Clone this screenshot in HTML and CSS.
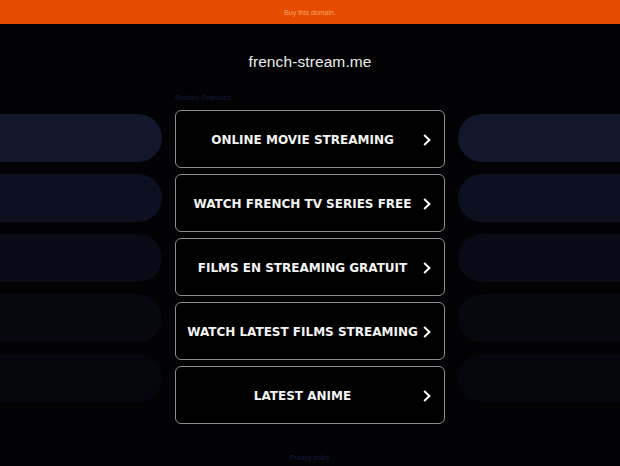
FILE: index.html
```html
<!DOCTYPE html>
<html lang="en">
<head>
<meta charset="utf-8">
<title>french-stream.me</title>
<link rel="stylesheet" href="styles.css">
</head>
<body>
<div class="topbar"><a class="buy" href="#">Buy this domain.</a></div>
<h1 class="title">french-stream.me</h1>
<div class="content">
  <div class="side side-left">
    <div class="pill p1"></div>
    <div class="pill p2"></div>
    <div class="pill p3"></div>
    <div class="pill p4"></div>
    <div class="pill p5"></div>
  </div>
  <div class="center">
    <div class="label">Related Searches</div>
    <div class="links">
      <a class="link" href="#"><span class="link-text">ONLINE MOVIE STREAMING</span><svg class="chev" width="8" height="12" viewBox="0 0 8 12"><path d="M1.2 1 L6.4 6 L1.2 11" fill="none" stroke="#fff" stroke-width="2"/></svg></a>
      <a class="link" href="#"><span class="link-text">WATCH FRENCH TV SERIES FREE</span><svg class="chev" width="8" height="12" viewBox="0 0 8 12"><path d="M1.2 1 L6.4 6 L1.2 11" fill="none" stroke="#fff" stroke-width="2"/></svg></a>
      <a class="link" href="#"><span class="link-text">FILMS EN STREAMING GRATUIT</span><svg class="chev" width="8" height="12" viewBox="0 0 8 12"><path d="M1.2 1 L6.4 6 L1.2 11" fill="none" stroke="#fff" stroke-width="2"/></svg></a>
      <a class="link" href="#"><span class="link-text">WATCH LATEST FILMS STREAMING</span><svg class="chev" width="8" height="12" viewBox="0 0 8 12"><path d="M1.2 1 L6.4 6 L1.2 11" fill="none" stroke="#fff" stroke-width="2"/></svg></a>
      <a class="link" href="#"><span class="link-text">LATEST ANIME</span><svg class="chev" width="8" height="12" viewBox="0 0 8 12"><path d="M1.2 1 L6.4 6 L1.2 11" fill="none" stroke="#fff" stroke-width="2"/></svg></a>
    </div>
    <div class="footer">Privacy policy</div>
  </div>
  <div class="side side-right">
    <div class="pill p1"></div>
    <div class="pill p2"></div>
    <div class="pill p3"></div>
    <div class="pill p4"></div>
    <div class="pill p5"></div>
  </div>
</div>
</body>
</html>
```
FILE: styles.css
```css
html, body {
  margin: 0;
  padding: 0;
  background: #020205;
  overflow: hidden;
}
body {
  width: 620px;
  height: 466px;
  font-family: "Liberation Sans", Arial, sans-serif;
}
.topbar {
  height: 24px;
  background: #e64c00;
  display: flex;
  align-items: center;
  justify-content: center;
}
.buy {
  font-size: 7px;
  color: #f4a664;
  text-decoration: none;
}
.title {
  margin: 0;
  padding-top: 28px;
  height: 20px;
  line-height: 20px;
  margin-bottom: 18px;
  text-align: center;
  font-weight: normal;
  font-size: 15.5px;
  color: #ececec;
  letter-spacing: 0.1px;
}
.content {
  display: flex;
  gap: 13px;
  align-items: flex-start;
}
.side {
  width: 162px;
  flex: none;
  padding-top: 24px;
  display: flex;
  flex-direction: column;
  gap: 12px;
}
.pill {
  height: 48px;
}
.side-left .pill { border-radius: 0 24px 24px 0; }
.side-right .pill { border-radius: 24px 0 0 24px; }
.p1 { background: #12172b; }
.p2 { background: #0d1020; }
.p3 { background: #080a16; }
.p4 { background: #06070f; }
.p5 { background: #05060d; }
.center {
  width: 270px;
  flex: none;
  display: flex;
  flex-direction: column;
}
.label {
  height: 16px;
  line-height: 16px;
  margin-bottom: 4px;
  font-size: 7px;
  color: #121838;
}
.links {
  display: flex;
  flex-direction: column;
  gap: 6px;
}
.link {
  box-sizing: border-box;
  height: 58px;
  border: 1.5px solid #8c8c8c;
  border-radius: 6px;
  background: #000;
  display: flex;
  align-items: center;
  padding: 1px 13px 0 6px;
  text-decoration: none;
}
.link-text {
  flex: 1;
  text-align: center;
  font-family: "DejaVu Sans", Verdana, sans-serif;
  font-weight: bold;
  font-size: 12px;
  letter-spacing: 0;
  color: #f4f4f4;
  white-space: nowrap;
}
.chev {
  flex: none;
  display: block;
}
.footer {
  margin-top: 28px;
  line-height: 12px;
  text-align: center;
  font-size: 6.5px;
  color: #161c44;
}
```
